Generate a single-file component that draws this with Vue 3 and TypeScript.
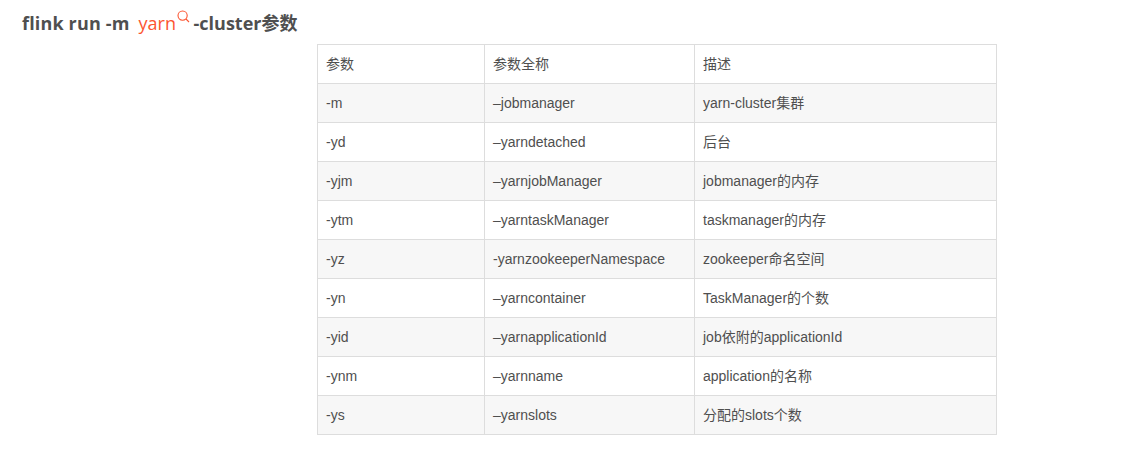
<script setup lang="ts">
const rows: [string, string, string][] = [
  ['参数', '参数全称', '描述'],
  ['-m', '–jobmanager', 'yarn-cluster集群'],
  ['-yd', '–yarndetached', '后台'],
  ['-yjm', '–yarnjobManager', 'jobmanager的内存'],
  ['-ytm', '–yarntaskManager', 'taskmanager的内存'],
  ['-yz', '-yarnzookeeperNamespace', 'zookeeper命名空间'],
  ['-yn', '–yarncontainer', 'TaskManager的个数'],
  ['-yid', '–yarnapplicationId', 'job依附的applicationId'],
  ['-ynm', '–yarnname', 'application的名称'],
  ['-ys', '–yarnslots', '分配的slots个数'],
]
</script>

<template>
  <div class="page">
    <h4 class="title">
      <span class="lead">flink run -m</span>
      <span class="link"><span class="word">yarn</span><svg class="search" width="13" height="13" viewBox="0 0 13 13" fill="none" stroke="#fc5531" stroke-width="1.1"><circle cx="5.6" cy="5.6" r="4.6" /><path d="M9 9l3 3" /></svg></span>
      <span>-cluster参数</span>
    </h4>
    <table class="grid">
      <colgroup>
        <col class="c1" />
        <col class="c2" />
        <col class="c3" />
      </colgroup>
      <tbody>
        <tr v-for="(r, i) in rows" :key="i">
          <td v-for="(c, j) in r" :key="j">{{ c }}</td>
        </tr>
      </tbody>
    </table>
  </div>
</template>

<style scoped>
.page {
  width: 1123px;
  height: 465px;
  background: #fff;
  padding: 11px 0 0 22px;
  box-sizing: border-box;
  overflow: hidden;
  font-family: "Liberation Sans", "Noto Sans CJK SC", sans-serif;
}
.title {
  margin: 0;
  height: 24px;
  display: flex;
  align-items: flex-start;
  font-family: "Open Sans", "Noto Sans CJK SC", sans-serif;
  font-size: 18px;
  line-height: 24px;
  font-weight: 700;
  color: #4f4f4f;
}
.lead {
  letter-spacing: 0.16px;
}
.link {
  margin-left: 9px;
  font-weight: 400;
  color: #fc5531;
  display: flex;
  align-items: flex-start;
}
.word {
  width: 37px;
}
.search {
  margin-top: -1px;
  margin-right: 4px;
  margin-left: 1px;
}
.grid {
  margin: 9px 0 0 295px;
  width: 679px;
  table-layout: fixed;
  border-collapse: collapse;
  font-size: 14px;
  color: #4f4f4f;
}
.c1 { width: 167px; }
.c2 { width: 210px; }
.c3 { width: 302px; }
td {
  height: 39px;
  box-sizing: border-box;
  border: 1px solid #ddd;
  padding: 0 8px;
  line-height: 22px;
}
tr:nth-child(even) td {
  background: #f7f7f7;
}
</style>
